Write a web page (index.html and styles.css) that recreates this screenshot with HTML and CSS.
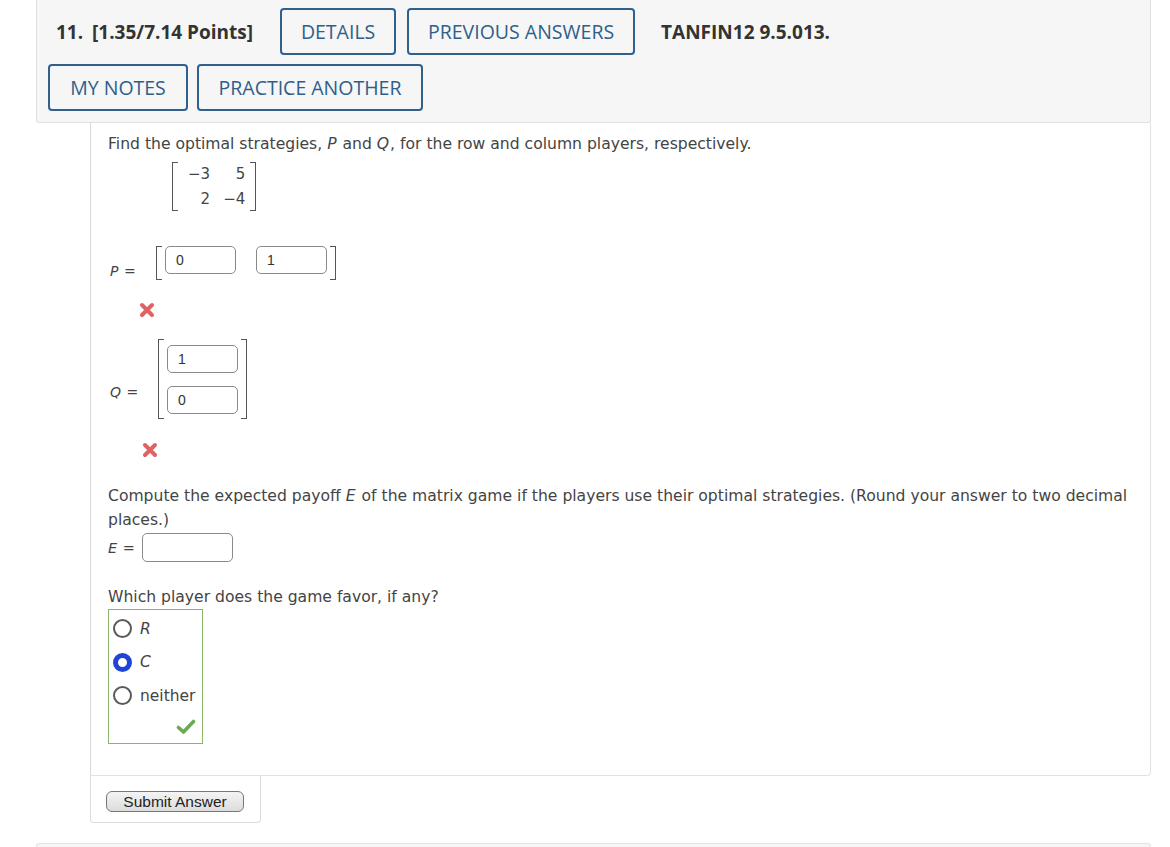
FILE: index.html
```html
<!DOCTYPE html>
<html>
<head>
<meta charset="utf-8">
<link rel="stylesheet" href="styles.css">
</head>
<body>
<div class="page">
  <div class="head">
    <div class="head-row row1">
      <span class="qnum">11.</span>
      <span class="pts">[1.35/7.14 Points]</span>
      <span class="btn b-details">DETAILS</span>
      <span class="btn b-prev">PREVIOUS ANSWERS</span>
      <span class="code">TANFIN12 9.5.013.</span>
    </div>
    <div class="head-row row2">
      <span class="btn b-notes">MY NOTES</span>
      <span class="btn b-practice">PRACTICE ANOTHER</span>
    </div>
  </div>

  <div class="body">
    <p class="txt find">Find the optimal strategies, <i>P</i> and <i>Q</i>, for the row and column players, respectively.</p>
    <div class="given">
      <div class="mat given-mat">
        <span>−3</span><span>5</span>
        <span>2</span><span>−4</span>
      </div>
    </div>

    <div class="eqrow prow">
      <span class="lbl"><i>P</i> =</span>
      <div class="mat pmat">
        <span class="inp">0</span>
        <span class="inp">1</span>
      </div>
    </div>
    <div class="mark markp"><svg width="16" height="16" viewBox="0 0 16 16"><path d="M3 3 L13 13 M13 3 L3 13" stroke="#e06262" stroke-width="4" stroke-linecap="round"/></svg></div>

    <div class="eqrow qrow">
      <span class="lbl"><i>Q</i> =</span>
      <div class="mat qmat">
        <span class="inp">1</span>
        <span class="inp">0</span>
      </div>
    </div>
    <div class="mark markq"><svg width="16" height="16" viewBox="0 0 16 16"><path d="M3 3 L13 13 M13 3 L3 13" stroke="#e06262" stroke-width="4" stroke-linecap="round"/></svg></div>

    <p class="txt compute">Compute the expected payoff <i>E</i> of the matrix game if the players use their optimal strategies. (Round your answer to two decimal places.)</p>
    <div class="erow"><span class="elbl"><i>E</i> =</span><span class="inp einp"></span></div>

    <p class="txt which">Which player does the game favor, if any?</p>
    <div class="radios">
      <div class="opt"><span class="rad"></span><i>R</i></div>
      <div class="opt"><span class="rad on"></span><i>C</i></div>
      <div class="opt"><span class="rad"></span>neither</div>
      <div class="check"><svg width="20" height="16" viewBox="0 0 20 16"><path d="M2.5 8.5 L7.5 13 L17.5 2.5" fill="none" stroke="#6aaa55" stroke-width="3.6" stroke-linecap="round" stroke-linejoin="round"/></svg></div>
    </div>
  </div>
  <div class="submitbox">
    <span class="submit">Submit Answer</span>
  </div>
  <div class="nextpanel"></div>
</div>
</body>
</html>
```
FILE: styles.css
```css
html, body { margin: 0; padding: 0; background: #fff; }
body { font-family: "DejaVu Sans", Verdana, sans-serif; color: #444; }
.page { margin-left: 36px; width: 1115px; }

.head {
  background: #f6f6f6;
  border: 1px solid #e0e0e0;
  border-top: none;
  border-radius: 0 0 3px 3px;
  padding: 8px 0 11px 11px;
  font-family: "Open Sans", sans-serif;
}
.head-row { display: flex; align-items: center; }
.row1 { padding-left: 8px; }
.row2 { margin-top: 9px; }
.qnum { font-weight: 700; font-size: 19px; color: #333; width: 36px; }
.pts { font-weight: 700; font-size: 19px; color: #333; }
.code { font-weight: 700; font-size: 19px; color: #333; margin-left: 26px; }
.btn {
  box-sizing: border-box;
  height: 47px;
  display: inline-flex; align-items: center; justify-content: center;
  border: 2px solid #2f618c;
  border-radius: 4px;
  color: #2e5f8b;
  font-size: 19.5px;
  font-weight: 500;
  padding: 0;
  white-space: nowrap;
}
.b-details { width: 116px; margin-left: 27px; margin-right: 11px; }
.b-prev { width: 228px; }
.b-notes { width: 140px; margin-right: 9px; }
.b-practice { width: 226px; }

.body {
  margin-left: 54px;
  border-left: 1px solid #d8d8d8;
  border-right: 1px solid #e2e2e2;
  border-bottom: 1px solid #e2e2e2;
  border-radius: 0 0 4px 0;
  padding: 0 8px 0 17px;
  height: 653px;
  box-sizing: border-box;
}
.txt { margin: 0; font-size: 15.6px; line-height: 24px; }
.find { padding-top: 9px; }
i { font-style: italic; padding-right: 1px; }

.mat { position: relative; display: inline-grid; }
.mat::before, .mat::after {
  content: ""; position: absolute; top: 0; bottom: 0; width: 5px;
  border: 1.4px solid #555;
}
.mat::before { left: 0; border-right: none; }
.mat::after { right: 0; border-left: none; }

.given { padding-left: 64px; margin-top: 6px; }
.given-mat {
  grid-template-columns: auto auto;
  column-gap: 13px; row-gap: 1px;
  padding: 0 11px 0 16px;
  font-size: 15px; line-height: 24px;
  justify-items: end;
}

.eqrow { display: flex; align-items: center; }
.lbl { font-size: 14px; width: 46px; padding-left: 2px; }
.prow { margin-top: 35px; }
.prow .lbl { padding-top: 16px; }
.pmat { grid-template-columns: auto auto; column-gap: 20px; padding: 0 9px 6px 9px; }
.qrow { margin-top: 21px; }
.qrow .lbl { width: 48px; padding-top: 25px; }
.qmat { grid-template-columns: auto; row-gap: 13px; padding: 6px 9px 5px 9px; }

.inp {
  box-sizing: border-box;
  width: 71px; height: 28px;
  border: 1px solid #8a8a8a;
  border-radius: 5px;
  font-family: "Liberation Sans", Arial, sans-serif;
  font-size: 14px; color: #333;
  padding: 5px 0 0 10px;
  background: #fff;
}

.mark { height: 16px; }
.markp { margin: 22px 0 0 31px; }
.markq { margin: 23px 0 0 34px; }

.compute { margin-top: 26px; }
.erow { display: flex; align-items: center; margin-top: 1px; }
.elbl { font-size: 14.5px; width: 34px; }
.einp { width: 91px; height: 29px; }

.which { margin-top: 23px; }
.radios {
  width: 95px; height: 135px; box-sizing: border-box;
  border: 1px solid #8ab56a;
  margin-top: 0;
  padding: 11px 0 0 4px;
  position: relative;
  font-size: 15.5px;
}
.opt { display: flex; align-items: center; height: 33.5px; }
.opt:first-child { margin-top: -9px; }
.rad {
  box-sizing: border-box; width: 19px; height: 19px; border-radius: 50%;
  border: 2px solid #5a5a5a; margin-right: 8px; background: #fff;
}
.rad.on { border: 5.5px solid #1f45d4; }
.check { position: absolute; right: 6px; bottom: 8px; line-height: 0; }

.submitbox {
  margin-left: 54px;
  width: 171px; height: 47px; box-sizing: border-box;
  border: 1px solid #dcdcdc; border-top: none;
  border-radius: 0 0 4px 4px;
  padding: 15px 0 0 15px;
}
.submit {
  display: inline-block; box-sizing: border-box;
  width: 138px; height: 21px;
  border: 1px solid #777; border-radius: 6px;
  background: linear-gradient(#f4f4f4, #dcdcdc);
  font-family: "Liberation Sans", Arial, sans-serif; font-size: 15.5px; color: #222;
  text-align: center; line-height: 19px;
}
.nextpanel {
  margin-top: 20px; height: 10px;
  border: 1px solid #e2e2e2; border-bottom: none;
  border-radius: 4px 4px 0 0;
  background: #f6f6f6;
}
```
